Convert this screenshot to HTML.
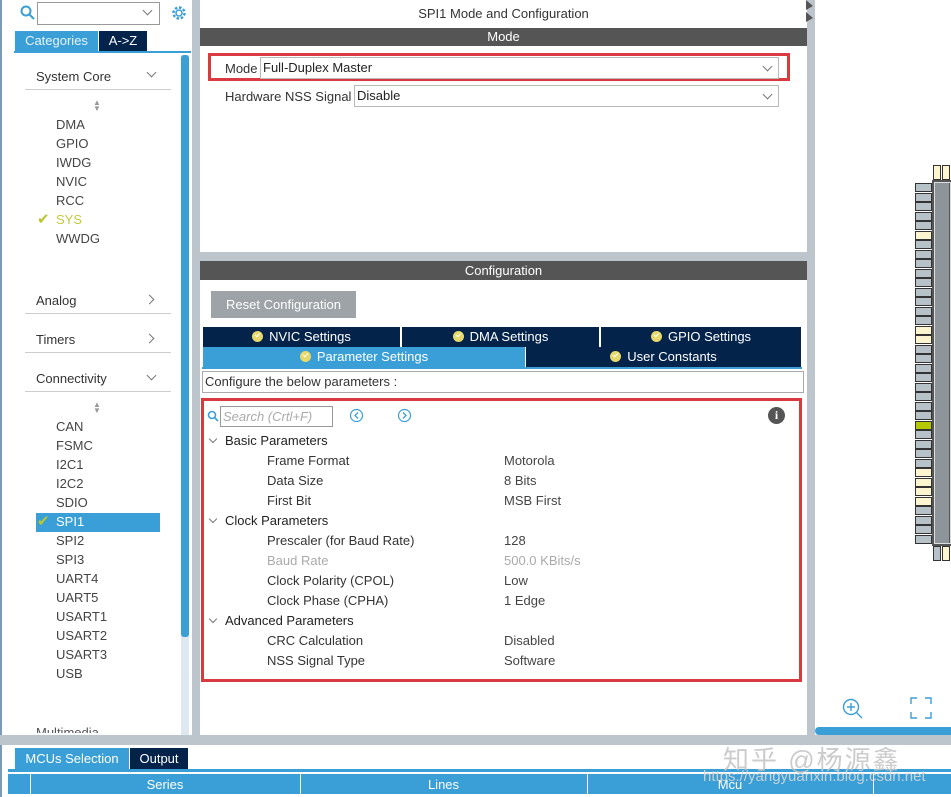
<!DOCTYPE html>
<html><head><meta charset="utf-8"><style>
*{margin:0;padding:0;box-sizing:border-box}
body{width:951px;height:797px;position:relative;overflow:hidden;background:#bcc5cb;font-family:"Liberation Sans",Arial,sans-serif;font-size:13px;color:#333}
.a{position:absolute}
.t{position:absolute;white-space:nowrap}
.sel{position:absolute;background:#fff;border:1px solid #b9b9b9;font-size:13px;padding-left:2px;line-height:20px;color:#222}
.chev{position:absolute;width:7px;height:7px;border-right:1px solid #777;border-bottom:1px solid #777;transform:rotate(45deg)}
.chr{position:absolute;width:7px;height:7px;border-right:1px solid #777;border-top:1px solid #777;transform:rotate(45deg)}
.ok{display:inline-block;width:11px;height:11px;border-radius:50%;background:#e6d86a;vertical-align:-1px;margin-right:6px;position:relative}
.ok:after{content:"";position:absolute;left:3px;top:2px;width:4px;height:2px;border-left:1.5px solid #fff;border-bottom:1.5px solid #fff;transform:rotate(-45deg)}
.tab{position:absolute;color:#fff;text-align:center;font-size:13px;line-height:19px}
.li{position:absolute;left:56px;font-size:13px;color:#444}
.pin{position:absolute;left:915px;width:17px;height:9px;background:#b7c1c8;border:1px solid #333;font-size:4px}
</style></head><body>
<div class="a" style="left:0;top:0;width:192px;height:735px;background:#fff;border-left:2px solid #7b9bb5"></div>
<svg class="a" style="left:20px;top:5px" width="16" height="16"><circle cx="6" cy="6" r="4.5" fill="none" stroke="#3a9fd6" stroke-width="2"/><line x1="9.5" y1="9.5" x2="14" y2="14" stroke="#3a9fd6" stroke-width="2"/></svg>
<div class="a" style="left:37px;top:2px;width:123px;height:23px;border:1px solid #999;background:#fff"></div>
<div class="chev" style="left:144px;top:7px"></div>
<svg class="a" style="left:170px;top:4px" width="18" height="18"><circle cx="9" cy="9" r="5.5" fill="none" stroke="#3a9fd6" stroke-width="2.5" stroke-dasharray="2.5 1.8"/><circle cx="9" cy="9" r="3" fill="none" stroke="#3a9fd6" stroke-width="1.5"/></svg>
<div class="tab" style="left:15px;top:31px;width:83px;height:20px;background:#3a9fd6;color:#e8f4fb">Categories</div>
<div class="tab" style="left:99px;top:31px;width:48px;height:20px;background:#03234b">A-&gt;Z</div>
<div class="a" style="left:14px;top:51px;width:177px;height:2px;background:#3a9fd6"></div>
<div class="a" style="left:181px;top:55px;width:8px;height:680px;background:#dde8f0"></div>
<div class="a" style="left:181px;top:55px;width:8px;height:582px;background:#3a9fd6;border-radius:3px"></div>
<div class="t" style="left:36px;top:69px;font-size:13px;color:#333">System Core</div><div class="chev" style="left:148px;top:69px"></div>
<div class="a" style="left:25px;top:89px;width:146px;height:1px;background:#ccc"></div>
<div class="t" style="left:93px;top:100px;font-size:8px;color:#999;line-height:6px">▲<br>▼</div>
<div class="li" style="top:117px">DMA</div><div class="li" style="top:136px">GPIO</div><div class="li" style="top:155px">IWDG</div><div class="li" style="top:174px">NVIC</div><div class="li" style="top:193px">RCC</div>
<div class="li" style="top:212px;color:#c6c93a">SYS</div><div class="t" style="left:37px;top:210px;color:#b8c630;font-size:15px">✔</div>
<div class="li" style="top:231px">WWDG</div>
<div class="t" style="left:36px;top:293px">Analog</div><div class="chr" style="left:146px;top:296px"></div>
<div class="a" style="left:25px;top:313px;width:146px;height:1px;background:#ccc"></div>
<div class="t" style="left:36px;top:332px">Timers</div><div class="chr" style="left:146px;top:335px"></div>
<div class="a" style="left:25px;top:352px;width:146px;height:1px;background:#ccc"></div>
<div class="t" style="left:36px;top:371px">Connectivity</div><div class="chev" style="left:148px;top:372px"></div>
<div class="a" style="left:25px;top:391px;width:146px;height:1px;background:#ccc"></div>
<div class="t" style="left:93px;top:402px;font-size:8px;color:#999;line-height:6px">▲<br>▼</div>
<div class="li" style="top:419px">CAN</div><div class="li" style="top:438px">FSMC</div><div class="li" style="top:457px">I2C1</div><div class="li" style="top:476px">I2C2</div><div class="li" style="top:495px">SDIO</div>
<div class="a" style="left:36px;top:513px;width:124px;height:19px;background:#3a9fd6"></div>
<div class="li" style="top:514px;color:#fff">SPI1</div><div class="t" style="left:37px;top:512px;color:#b8c630;font-size:15px">✔</div>
<div class="li" style="top:533px">SPI2</div><div class="li" style="top:552px">SPI3</div><div class="li" style="top:571px">UART4</div><div class="li" style="top:590px">UART5</div><div class="li" style="top:609px">USART1</div><div class="li" style="top:628px">USART2</div><div class="li" style="top:647px">USART3</div><div class="li" style="top:666px">USB</div>
<div class="t" style="left:36px;top:726px;color:#555;height:7px;overflow:hidden;line-height:14px">Multimedia</div>
<div class="a" style="left:200px;top:0;width:607px;height:252px;background:#fff"></div>
<div class="t" style="left:200px;width:607px;text-align:center;top:6px;font-size:13px;color:#333">SPI1 Mode and Configuration</div>
<div class="a" style="left:200px;top:28px;width:607px;height:18px;background:#555;color:#fff;text-align:center;line-height:18px">Mode</div>
<div class="a" style="left:208px;top:53px;width:582px;height:28px;border:3px solid #d9393f"></div>
<div class="t" style="left:225px;top:61px">Mode</div>
<div class="sel" style="left:260px;top:57px;width:519px;height:22px">Full-Duplex Master</div><div class="chev" style="left:764px;top:63px"></div>
<div class="t" style="left:225px;top:89px">Hardware NSS Signal</div>
<div class="sel" style="left:354px;top:85px;width:425px;height:22px">Disable</div><div class="chev" style="left:764px;top:91px"></div>
<svg class="a" style="left:806px;top:0" width="9" height="22"><path d="M0 0L7 6L0 10Z M0 12L7 18L0 22Z" fill="#555"/></svg>
<div class="a" style="left:200px;top:261px;width:607px;height:474px;background:#fff"></div>
<div class="a" style="left:200px;top:261px;width:607px;height:19px;background:#555;color:#fff;text-align:center;line-height:19px">Configuration</div>
<div class="a" style="left:211px;top:291px;width:145px;height:27px;background:#9ea3a8;color:#fff;text-align:center;line-height:27px">Reset Configuration</div>
<div class="tab" style="left:203px;top:327px;width:197px;height:20px;background:#03234b"><span class="ok"></span>NVIC Settings</div>
<div class="tab" style="left:402px;top:327px;width:197px;height:20px;background:#03234b"><span class="ok"></span>DMA Settings</div>
<div class="tab" style="left:601px;top:327px;width:200px;height:20px;background:#03234b"><span class="ok"></span>GPIO Settings</div>
<div class="tab" style="left:203px;top:347px;width:322px;height:20px;background:#3a9fd6"><span class="ok"></span>Parameter Settings</div>
<div class="tab" style="left:526px;top:347px;width:275px;height:20px;background:#03234b"><span class="ok"></span>User Constants</div>
<div class="a" style="left:202px;top:367px;width:600px;height:2px;background:#3a9fd6"></div>
<div class="a" style="left:202px;top:371px;width:602px;height:22px;border:1px solid #aaa;line-height:20px;padding-left:2px;color:#333">Configure the below parameters :</div>
<div class="a" style="left:201px;top:398px;width:601px;height:284px;border:3px solid #d9393f"></div>
<svg class="a" style="left:207px;top:410px" width="12" height="12"><circle cx="5" cy="5" r="3.5" fill="none" stroke="#3a9fd6" stroke-width="1.6"/><line x1="7.5" y1="7.5" x2="11" y2="11" stroke="#3a9fd6" stroke-width="1.6"/></svg>
<div class="a" style="left:220px;top:406px;width:113px;height:21px;border:1px solid #999;font-style:italic;color:#aaa;line-height:19px;padding-left:2px">Search (Crtl+F)</div>
<svg class="a" style="left:349px;top:408px" width="66" height="15"><circle cx="7.5" cy="7.5" r="6" fill="none" stroke="#3a9fd6" stroke-width="1.2"/><path d="M9 4.5L6 7.5L9 10.5" fill="none" stroke="#3a9fd6" stroke-width="1.3"/><circle cx="55.5" cy="7.5" r="6" fill="none" stroke="#3a9fd6" stroke-width="1.2"/><path d="M54 4.5L57 7.5L54 10.5" fill="none" stroke="#3a9fd6" stroke-width="1.3"/></svg>
<div class="a" style="left:768px;top:407px;width:17px;height:17px;border-radius:50%;background:#555;color:#fff;font-weight:bold;font-size:12px;text-align:center;line-height:17px;font-family:'Liberation Serif',serif">i</div>
<div class="chev" style="left:210px;top:436px;width:6px;height:6px"></div><div class="t" style="left:225px;top:433px;color:#222">Basic Parameters</div>
<div class="t" style="left:267px;top:453px">Frame Format</div><div class="t" style="left:504px;top:453px;color:#444">Motorola</div>
<div class="t" style="left:267px;top:473px">Data Size</div><div class="t" style="left:504px;top:473px;color:#444">8 Bits</div>
<div class="t" style="left:267px;top:493px">First Bit</div><div class="t" style="left:504px;top:493px;color:#444">MSB First</div>
<div class="chev" style="left:210px;top:516px;width:6px;height:6px"></div><div class="t" style="left:225px;top:513px;color:#222">Clock Parameters</div>
<div class="t" style="left:267px;top:533px">Prescaler (for Baud Rate)</div><div class="t" style="left:504px;top:533px;color:#444">128</div>
<div class="t" style="left:267px;top:553px;color:#aaa">Baud Rate</div><div class="t" style="left:504px;top:553px;color:#aaa">500.0 KBits/s</div>
<div class="t" style="left:267px;top:573px">Clock Polarity (CPOL)</div><div class="t" style="left:504px;top:573px;color:#444">Low</div>
<div class="t" style="left:267px;top:593px">Clock Phase (CPHA)</div><div class="t" style="left:504px;top:593px;color:#444">1 Edge</div>
<div class="chev" style="left:210px;top:616px;width:6px;height:6px"></div><div class="t" style="left:225px;top:613px;color:#222">Advanced Parameters</div>
<div class="t" style="left:267px;top:633px">CRC Calculation</div><div class="t" style="left:504px;top:633px;color:#444">Disabled</div>
<div class="t" style="left:267px;top:653px">NSS Signal Type</div><div class="t" style="left:504px;top:653px;color:#444">Software</div>
<div class="a" style="left:815px;top:0;width:136px;height:735px;background:#fff"></div>
<div class="a" style="left:815px;top:727px;width:136px;height:8px;background:#3a9fd6;border-radius:4px 0 0 4px"></div>
<div class="a" style="left:932px;top:180px;width:19px;height:366px;background:#8d959b;border:2px solid #555"></div>
<div class="a" style="left:934px;top:182px;width:17px;height:362px;border:1px solid #ddd"></div>
<div class="a" style="left:933px;top:165px;width:8px;height:15px;background:#fdf5d0;border:1px solid #333"></div>
<div class="a" style="left:942px;top:165px;width:8px;height:15px;background:#fdf5d0;border:1px solid #333"></div>
<div class="a" style="left:933px;top:546px;width:8px;height:15px;background:#b7c1c8;border:1px solid #333"></div>
<div class="a" style="left:942px;top:546px;width:8px;height:15px;background:#fdf5d0;border:1px solid #333"></div>
<div class="pin" style="top:183px"></div><div class="pin" style="top:192.5px"></div><div class="pin" style="top:202px"></div><div class="pin" style="top:211.5px"></div><div class="pin" style="top:221px"></div><div class="pin" style="top:230.5px;background:#fdf5d0"></div><div class="pin" style="top:240px"></div><div class="pin" style="top:249.5px"></div><div class="pin" style="top:259px"></div><div class="pin" style="top:268.5px"></div><div class="pin" style="top:278px"></div><div class="pin" style="top:287.5px"></div><div class="pin" style="top:297px"></div><div class="pin" style="top:306.5px"></div><div class="pin" style="top:316px"></div><div class="pin" style="top:325.5px;background:#fdf5d0"></div><div class="pin" style="top:335px;background:#fdf5d0"></div><div class="pin" style="top:344.5px"></div><div class="pin" style="top:354px"></div><div class="pin" style="top:363.5px"></div><div class="pin" style="top:373px"></div><div class="pin" style="top:382.5px"></div><div class="pin" style="top:392px"></div><div class="pin" style="top:401.5px"></div><div class="pin" style="top:411px"></div><div class="pin" style="top:420.5px;background:#b5c800"></div><div class="pin" style="top:430px"></div><div class="pin" style="top:439.5px"></div><div class="pin" style="top:449px"></div><div class="pin" style="top:458.5px"></div><div class="pin" style="top:468px;background:#fdf5d0"></div><div class="pin" style="top:477.5px;background:#fdf5d0"></div><div class="pin" style="top:487px;background:#fdf5d0"></div><div class="pin" style="top:496.5px;background:#fdf5d0"></div><div class="pin" style="top:506px"></div><div class="pin" style="top:515.5px"></div><div class="pin" style="top:525px"></div><div class="pin" style="top:534.5px"></div>
<svg class="a" style="left:841px;top:697px" width="24" height="24"><circle cx="10" cy="10" r="7.5" fill="none" stroke="#3a9fd6" stroke-width="1.4"/><path d="M10 6v8M6 10h8M15.5 15.5L21 21" stroke="#3a9fd6" stroke-width="1.4"/></svg>
<svg class="a" style="left:910px;top:697px" width="22" height="22"><path d="M1 7V1h6M15 1h6v6M21 15v6h-6M7 21H1v-6" fill="none" stroke="#3a9fd6" stroke-width="1.4"/></svg>
<div class="a" style="left:0;top:745px;width:951px;height:52px;background:#fff;border-left:2px solid #7b9bb5"></div>
<div class="tab" style="left:15px;top:748px;height:21px;width:114px;background:#3a9fd6;line-height:21px">MCUs Selection</div>
<div class="tab" style="left:130px;top:748px;width:58px;height:21px;background:#03234b;line-height:21px">Output</div>
<div class="a" style="left:8px;top:769px;width:943px;height:3px;background:#3a9fd6"></div>
<div class="a" style="left:8px;top:774px;width:943px;height:20px;background:#3a9fd6"></div>
<div class="a" style="left:30px;top:774px;width:1px;height:20px;background:#fff"></div>
<div class="a" style="left:300px;top:774px;width:1px;height:20px;background:#fff"></div>
<div class="a" style="left:587px;top:774px;width:1px;height:20px;background:#fff"></div>
<div class="a" style="left:873px;top:774px;width:1px;height:20px;background:#fff"></div>
<div class="t" style="left:30px;width:270px;text-align:center;top:777px;color:#fff">Series</div>
<div class="t" style="left:300px;width:287px;text-align:center;top:777px;color:#fff">Lines</div>
<div class="t" style="left:587px;width:286px;text-align:center;top:777px;color:#fff">Mcu</div>
<div class="t" style="left:723px;top:740px;font-size:26px;letter-spacing:2px;color:rgba(195,195,195,.85);font-family:'Liberation Sans','Noto Sans CJK SC',sans-serif">知乎 @杨源鑫</div>
<div class="t" style="left:703px;top:768px;font-size:15px;color:rgba(215,215,215,.9)">https://yangyuanxin.blog.csdn.net</div>
</body></html>
